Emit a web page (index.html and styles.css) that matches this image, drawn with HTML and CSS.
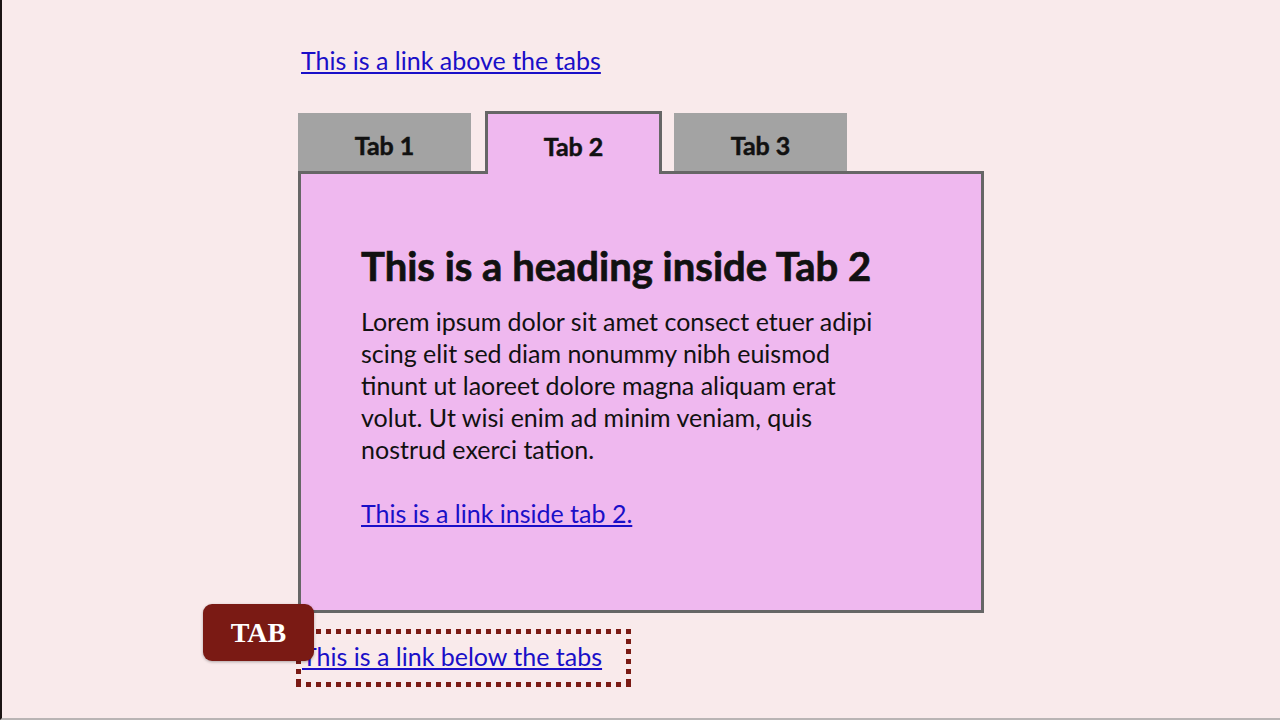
FILE: index.html
```html
<!DOCTYPE html>
<html lang="en">
<head>
    <meta charset="UTF-8">
    <meta name="viewport" content="width=device-width, initial-scale=1.0">
    <title>Tabs demo</title>
    <link rel="stylesheet" href="styles.css">
</head>
<body>
    <div class="page">
        <p class="link-row"><a href="#">This is a link above the tabs</a></p>

        <div class="tabs">
            <ul class="tab-list">
                <li class="tab">Tab 1</li>
                <li class="tab active">Tab 2</li>
                <li class="tab">Tab 3</li>
            </ul>
            <div class="panel">
                <h2>This is a heading inside Tab 2</h2>
                <p>Lorem ipsum dolor sit amet consect etuer adipi scing elit sed diam nonummy nibh euismod tinunt ut laoreet dolore magna aliquam erat volut. Ut wisi enim ad minim veniam, quis nostrud exerci tation.</p>
                <p class="panel-link"><a href="#">This is a link inside tab 2.</a></p>
            </div>
        </div>

        <div class="below">
            <span class="key-badge">TAB</span>
            <a href="#" class="focused">This is a link below the tabs</a>
        </div>
    </div>
</body>
</html>
```

FILE: styles.css
```css
html, body {
    margin: 0;
    height: 100%;
}
body {
    box-sizing: border-box;
    background-color: #f9eaeb;
    border-left: 2px solid #1c1414;
    border-bottom: 2px solid #b9b4b4;
    font-family: Lato, "Liberation Sans", sans-serif;
    color: #111;
}
a {
    color: #1a0fc8;
}
.page {
    margin-left: 296px;
    width: 686px;
    padding-top: 42px;
}
.link-row {
    margin: 0 0 0 3px;
    font-size: 25px;
    line-height: 36px;
}

/* tab strip */
.tabs {
    margin-top: 33px;
}
.tab-list {
    display: flex;
    align-items: flex-end;
    margin: 0;
    padding: 0;
    list-style: none;
}
.tab {
    width: 173px;
    height: 58px;
    margin-right: 14px;
    background-color: #a3a3a3;
    font-weight: bold;
    font-size: 25px;
    line-height: 64px;
    text-align: center;
    -webkit-text-stroke: 0.5px #111;
}
.tab.active {
    position: relative;
    z-index: 1;
    width: 171px;
    height: 60px;
    margin-right: 12px;
    margin-bottom: -3px;
    background-color: #efb8ef;
    border: 3px solid #666;
    border-bottom: none;
}
.panel {
    box-sizing: border-box;
    height: 442px;
    padding: 60px 0 0 60px;
    background-color: #efb8ef;
    border: 3px solid #666;
}
.panel h2 {
    margin: 8px 0 15px;
    font-weight: bold;
    font-size: 40px;
    line-height: 48px;
    -webkit-text-stroke: 0.7px #111;
}
.panel p {
    width: 530px;
    margin: 0;
    font-size: 25px;
    line-height: 32px;
}
.panel .panel-link {
    margin-top: 32px;
}

/* link with keyboard focus ring */
.below {
    position: relative;
    margin: 16px 0 0 -2px;
}
.focused {
    display: inline-block;
    padding: 10px 29px 14px 6px;
    font-size: 25px;
    line-height: 34px;
    background:
        repeating-linear-gradient(90deg, #7a1a14 0 5px, transparent 5px 10px) top left / 100% 5px no-repeat,
        repeating-linear-gradient(90deg, #7a1a14 0 5px, transparent 5px 10px) bottom left / 100% 5px no-repeat,
        repeating-linear-gradient(180deg, #7a1a14 0 5px, transparent 5px 10px) top left / 5px 100% no-repeat,
        repeating-linear-gradient(180deg, #7a1a14 0 5px, transparent 5px 10px) top right / 5px 100% no-repeat;
}
.key-badge {
    position: absolute;
    left: -93px;
    top: -25px;
    width: 111px;
    height: 57px;
    background-color: #7a1a14;
    border-radius: 9px;
    box-shadow: 0 1px 3px rgba(0, 0, 0, 0.3);
    color: #fff;
    font-family: "Liberation Serif", serif;
    font-weight: bold;
    font-size: 28px;
    line-height: 57px;
    text-align: center;
}
```
